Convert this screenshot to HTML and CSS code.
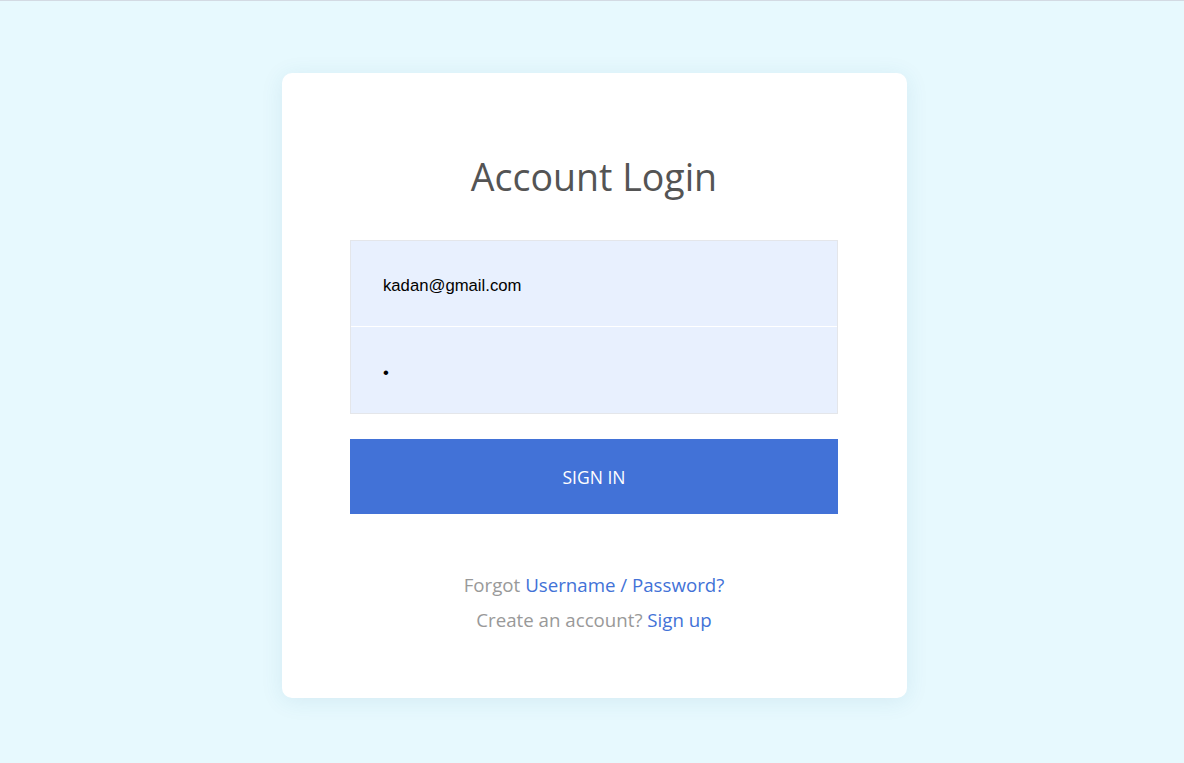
FILE: index.html
```html
<!DOCTYPE html>
<html lang="en">
<head>
<meta charset="utf-8">
<title>Account Login</title>
<link rel="stylesheet" href="styles.css">
</head>
<body>
<div class="topline"></div>
<main class="page">
  <form class="card" onsubmit="return false">
    <h1 class="title">Account Login</h1>
    <div class="fields">
      <input class="field" type="text" value="kadan@gmail.com" aria-label="Email">
      <input class="field field-pass" type="password" value="1" aria-label="Password">
    </div>
    <button class="btn" type="submit">SIGN IN</button>
    <div class="links">
      <p class="line"><span class="muted">Forgot</span> <a class="link" href="#">Username / Password?</a></p>
      <p class="line"><span class="muted">Create an account?</span> <a class="link" href="#">Sign up</a></p>
    </div>
  </form>
</main>
</body>
</html>
```
FILE: styles.css
```css
* { box-sizing: border-box; }
html, body { margin: 0; padding: 0; }
body {
  background: #e7f9fe;
  font-family: "Open Sans", "Liberation Sans", sans-serif;
  height: 763px;
  overflow: hidden;
}
.topline {
  height: 1px;
  background: #d3dae3;
}
.page {
  display: flex;
  justify-content: center;
  padding: 72px 0 0 5px;
}
.card {
  width: 625px;
  height: 625px;
  background: #fff;
  border-radius: 10px;
  box-shadow: 0 3px 22px rgba(40, 110, 150, 0.10);
  padding: 82px 69px 0 68px;
  display: flex;
  flex-direction: column;
}
.title {
  margin: 0 0 42px;
  font-size: 37.5px;
  font-weight: 400;
  line-height: 43px;
  color: #545454;
  text-align: center;
}
.fields {
  display: flex;
  flex-direction: column;
  border: 1px solid #e4e6ea;
}
.field {
  display: block;
  width: 100%;
  height: 85px;
  margin: 0;
  border: 0;
  outline: none;
  background: #e8f0fe;
  padding: 5px 32px 0;
  font-family: "Liberation Sans", Arial, sans-serif;
  font-size: 16.7px;
  color: #000;
}
.field-pass {
  border-top: 1px solid #ffffff;
  height: 87px;
}
.btn {
  margin-top: 25px;
  height: 75px;
  width: 100%;
  border: 0;
  background: #4272d7;
  color: #fff;
  font-family: "Open Sans", sans-serif;
  font-size: 17.5px;
  padding: 0;
  cursor: pointer;
}
.links {
  margin-top: 53px;
  text-align: center;
}
.line {
  margin: 0;
  font-size: 18.7px;
  line-height: 35px;
}
.muted { color: #999999; }
.link { color: #4272d7; text-decoration: none; }
```
